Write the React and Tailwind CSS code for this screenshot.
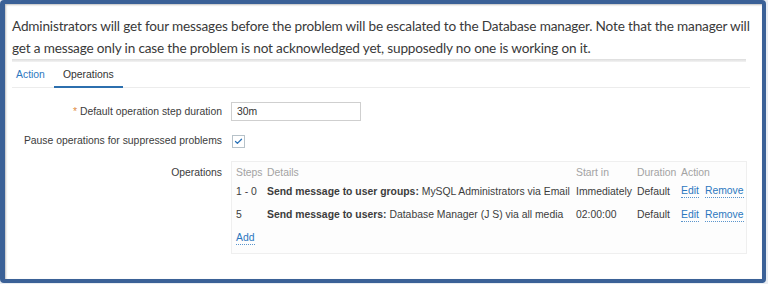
import { Check } from 'lucide-react'

const ops = [
  {
    steps: '1 - 0',
    kind: 'Send message to user groups:',
    rest: ' MySQL Administrators via Email',
    start: 'Immediately',
    duration: 'Default'
  },
  {
    steps: '5',
    kind: 'Send message to users:',
    rest: ' Database Manager (J S) via all media',
    start: '02:00:00',
    duration: 'Default'
  }
]

function DashLink({ children }) {
  return (
    <span className="text-[#2c78bf] border-b border-dotted border-[#5b95cc] leading-[12px]">{children}</span>
  )
}

function App() {
  return (
    <div className="w-[768px] h-[284px] bg-[#e9edf2] font-['Liberation_Sans',Arial,sans-serif]">
      <div className="w-[766px] h-[283px] bg-white border-[4px] border-l-[5px] border-[#3b6197] rounded-[4px] shadow-[inset_1px_1px_2px_rgba(0,0,0,0.25)] flex flex-col">
        {/* Description */}
        <div className="pl-[7px] pr-[8px] pt-[11px]">
          <p className="font-['Lato',sans-serif] text-[13.6px] tracking-[-0.17px] leading-[22px] text-[#3a3a3a]">
            Administrators will get four messages before the problem will be escalated to the Database manager. Note that the manager will get a message only in case the problem is not acknowledged yet, supposedly no one is working on it.
          </p>
          <div className="h-[3px] mr-[8px] bg-gradient-to-b from-[#dcdcdc] to-[#f3f3f3]" />
        </div>

        {/* Tabs */}
        <div className="ml-[7px] mr-[12px] flex items-end h-[26px] border-b border-[#ececec] text-[10.4px]">
          <div className="h-full flex items-center pl-[4px] pr-[9px] text-[#2c78bf]">Action</div>
          <div className="h-full flex items-center px-[9px] text-[#333] border-b-[2px] border-[#2c6fae] -mb-px">Operations</div>
        </div>

        {/* Form */}
        <div className="flex flex-col text-[10.4px] text-[#3c3c3c] mt-[14px]">
          <div className="flex items-center h-[19px]">
            <div className="w-[218px] text-right pr-[1px]">
              <span className="text-[#e0893e]">*</span> Default operation step duration
            </div>
            <div className="ml-[8px] w-[130px] h-[19px] border border-[#cfcfcf] flex items-center px-[5px] text-[#333]">30m</div>
          </div>

          <div className="flex items-center h-[14px] mt-[13px]">
            <div className="w-[218px] text-right pr-[1px]">Pause operations for suppressed problems</div>
            <div className="ml-[9px] w-[13px] h-[13px] border border-[#b7c2c9] flex items-center justify-center">
              <Check className="w-[9px] h-[9px] text-[#2a72b8]" strokeWidth={3.5} />
            </div>
          </div>

          <div className="flex items-start mt-[13px]">
            <div className="w-[218px] text-right pr-[1px] pt-[4px]">Operations</div>
            <div className="ml-[8px] w-[516px] h-[93px] border border-[#efefef] bg-[#fdfdfd] pl-[4px] pt-[1px]">
              <div className="grid grid-cols-[31px_309px_61px_44px_62px] items-center">
                <div className="h-[19px] flex items-center text-[#a3a3a3]">Steps</div>
                <div className="h-[19px] flex items-center text-[#a3a3a3]">Details</div>
                <div className="h-[19px] flex items-center text-[#a3a3a3]">Start in</div>
                <div className="h-[19px] flex items-center text-[#a3a3a3]">Duration</div>
                <div className="h-[19px] flex items-center text-[#a3a3a3]">Action</div>
                {ops.map((op, i) => (
                  <div key={op.steps} className="contents">
                    <div className={`${i === 0 ? 'h-[19px]' : 'h-[28px]'} flex items-center`}>{op.steps}</div>
                    <div className={`${i === 0 ? 'h-[19px]' : 'h-[28px]'} flex items-center whitespace-nowrap`}>
                      <span className="font-bold">{op.kind}</span>
                      <span className="whitespace-pre">{op.rest}</span>
                    </div>
                    <div className={`${i === 0 ? 'h-[19px]' : 'h-[28px]'} flex items-center`}>{op.start}</div>
                    <div className={`${i === 0 ? 'h-[19px]' : 'h-[28px]'} flex items-center`}>{op.duration}</div>
                    <div className={`${i === 0 ? 'h-[19px]' : 'h-[28px]'} flex items-center gap-[6px]`}>
                      <DashLink>Edit</DashLink>
                      <DashLink>Remove</DashLink>
                    </div>
                  </div>
                ))}
              </div>
              <div className="h-[18px] flex items-center">
                <DashLink>Add</DashLink>
              </div>
            </div>
          </div>
        </div>
      </div>
    </div>
  )
}

export default App
